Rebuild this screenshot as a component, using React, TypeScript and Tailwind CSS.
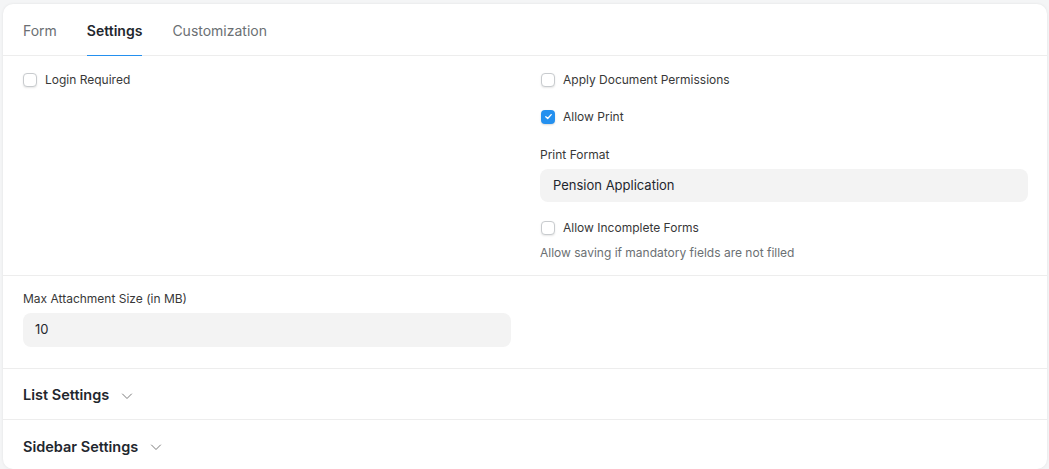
import { useState } from 'react';

type CheckProps = {
  label: string,
  checked?: boolean,
};

const Check = ({ label, checked }: CheckProps) => {
  const [on, setOn] = useState<boolean>(!!checked);
  return (
    <label onClick={() => setOn(v => !v)} className="flex items-center h-5 cursor-pointer select-none">
      {on ? (
        <span className="flex items-center justify-center w-[14px] h-[14px] rounded-[4px] bg-[#2490ef] shadow-[0_1px_2px_rgba(0,0,0,0.15)]">
          <svg width="9" height="9" viewBox="0 0 10 10" fill="none">
            <path d="M2 5.2L4.1 7.2L8 2.9" stroke="white" strokeWidth="1.5" strokeLinecap="round" strokeLinejoin="round" />
          </svg>
        </span>
      ) : (
        <span className="flex w-[14px] h-[14px] rounded-[4px] border border-[#c8cbce] bg-white shadow-[0_1px_2px_rgba(0,0,0,0.1)]"></span>
      )}
      <span className="ml-2 text-[12px] text-[#383838]">{label}</span>
    </label>
  );
};

const Chevron = () => (
  <svg width="12" height="12" viewBox="0 0 12 12" fill="none" className="ml-3 mt-0.5">
    <path d="M1.5 4L6 8.5L10.5 4" stroke="#7c7c7c" strokeWidth="1" strokeLinecap="round" strokeLinejoin="round" />
  </svg>
);

const App = () => {
  const [tab, setTab] = useState<string>('Settings');
  const tabs = ['Form', 'Settings', 'Customization'];

  return (
    <div className="w-[1049px] h-[469px] bg-[#f4f5f6] pt-1 pl-[3px] pr-[2px] overflow-hidden font-['Inter',sans-serif]">
      <div className="flex flex-col bg-white rounded-[10px] shadow-[0_0_3px_rgba(0,0,0,0.08)] h-[465px]">
        {/* tabs */}
        <div className="flex items-stretch h-[53px] px-5 gap-[30px] border-b border-[#ededed]">
          {tabs.map(t => (
            <button
              key={t}
              onClick={() => setTab(t)}
              className={t === tab
                ? 'flex items-center pt-0.5 text-[14px] font-semibold text-[#1f272e] border-b border-[#2490ef] -mb-px'
                : 'flex items-center pt-0.5 text-[14px] text-[#6b6f73]'}
            >
              {t}
            </button>
          ))}
        </div>

        {/* first section */}
        <div className="grid grid-cols-[488px_488px] gap-[29px] px-5 pt-[14px] pb-[14px] border-b border-[#ededed]">
          <div className="flex flex-col">
            <Check label="Login Required" />
          </div>
          <div className="flex flex-col pl-px">
            <Check label="Apply Document Permissions" />
            <div className="mt-[17px]">
              <Check label="Allow Print" checked />
            </div>
            <div className="mt-[18px] -ml-px h-5 flex items-center text-[12px] text-[#383838]">Print Format</div>
            <div className="mt-1 -ml-px h-[33px] flex items-center px-[13px] rounded-lg bg-[#f3f3f3] text-[13px] text-[#1f272e]">
              Pension Application
            </div>
            <div className="mt-4">
              <Check label="Allow Incomplete Forms" />
            </div>
            <div className="mt-[7px] -ml-px h-4 flex items-center text-[12px] text-[#6b6f73]">
              Allow saving if mandatory fields are not filled
            </div>
          </div>
        </div>

        {/* attachment size */}
        <div className="grid grid-cols-[488px_488px] gap-[29px] px-5 pt-[13px] pb-[21px] border-b border-[#ededed]">
          <div className="flex flex-col">
            <div className="h-5 flex items-center text-[12px] text-[#383838]">Max Attachment Size (in MB)</div>
            <div className="mt-1 h-[34px] flex items-center px-3 rounded-lg bg-[#f3f3f3] text-[13px] text-[#1f272e]">
              10
            </div>
          </div>
          <div></div>
        </div>

        {/* collapsed sections */}
        <div className="flex items-center h-[52px] pt-0.5 px-5 border-b border-[#ededed]">
          <span className="text-[14.5px] font-semibold text-[#1f272e]">List Settings</span>
          <Chevron />
        </div>
        <div className="flex items-center h-[50px] pt-1 px-5">
          <span className="text-[14.5px] font-semibold text-[#1f272e]">Sidebar Settings</span>
          <Chevron />
        </div>
      </div>
    </div>
  );
};

export default App;
